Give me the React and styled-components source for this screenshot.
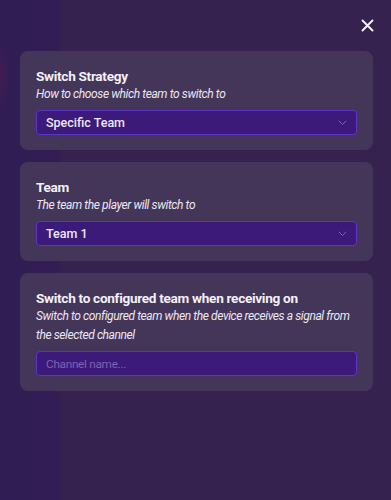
import React from "react";
import styled, { createGlobalStyle } from "styled-components";

const Global = createGlobalStyle`
  html, body { margin: 0; padding: 0; }
  body {
    background: #35224f;
    font-family: Roboto, "Liberation Sans", Arial, sans-serif;
    -webkit-font-smoothing: antialiased;
  }
`;

const Page = styled.div`
  position: relative;
  width: 391px;
  height: 500px;
  box-sizing: border-box;
  padding: 51px 18px 0 20px;
  background:
    radial-gradient(ellipse 10px 36px at 0px 75px, rgba(110, 30, 80, 0.3), transparent),
    linear-gradient(90deg, #301d55 0px, #321e54 58px, #35224f 62px, #35224f 100%);
  overflow: hidden;
`;

const CloseButton = styled.button`
  position: absolute;
  top: 18px;
  right: 17px;
  width: 14px;
  height: 14px;
  padding: 0;
  border: none;
  background: transparent;
  display: flex;
  align-items: center;
  justify-content: center;
  cursor: pointer;
`;

const Stack = styled.div`
  display: flex;
  flex-direction: column;
  gap: 12px;
`;

const Card = styled.section`
  background: #443659;
  border-radius: 8px;
  padding: 16px 16px 15px;
  display: flex;
  flex-direction: column;
`;

const Title = styled.h2`
  margin: 0;
  font-size: 13.6px;
  line-height: 18px;
  font-weight: 700;
  color: #f3f0f8;
  letter-spacing: -0.3px;
`;

const Subtitle = styled.p`
  margin: 0 0 6px;
  font-size: 12px;
  line-height: 19px;
  font-style: italic;
  color: #ebe6f2;
  letter-spacing: -0.4px;
`;

const Field = styled.div`
  height: 25px;
  box-sizing: border-box;
  border: 1px solid #5d34c6;
  border-radius: 4px;
  background: #3c1a79;
  display: flex;
  align-items: center;
  padding: 0 9px;
  font-size: ${(p) => (p.$placeholder ? "11.8px" : "12.5px")};
  font-weight: ${(p) => (p.$placeholder ? 400 : 500)};
  letter-spacing: ${(p) => (p.$placeholder ? "-0.3px" : "0")};
  color: ${(p) => (p.$placeholder ? "#7b62b3" : "#ece8f6")};
`;

const FieldText = styled.span`
  flex: 1;
`;

const Chevron = () => (
  <svg width="9" height="6" viewBox="0 0 9 6" fill="none">
    <path d="M1 1l3.5 3.5L8 1" stroke="#7a66b8" strokeWidth="1" strokeLinecap="round" strokeLinejoin="round" />
  </svg>
);

const Select = ({ value }) => (
  <Field>
    <FieldText>{value}</FieldText>
    <Chevron />
  </Field>
);

export default function App() {
  return (
    <>
      <Global />
      <Page>
        <CloseButton aria-label="Close">
          <svg width="13" height="13" viewBox="0 0 13 13">
            <path d="M1.5 1.5l10 10M11.5 1.5l-10 10" stroke="#f4f2f8" strokeWidth="1.9" strokeLinecap="round" />
          </svg>
        </CloseButton>
        <Stack>
          <Card>
            <Title>Switch Strategy</Title>
            <Subtitle>How to choose which team to switch to</Subtitle>
            <Select value="Specific Team" />
          </Card>
          <Card>
            <Title>Team</Title>
            <Subtitle>The team the player will switch to</Subtitle>
            <Select value="Team 1" />
          </Card>
          <Card>
            <Title>Switch to configured team when receiving on</Title>
            <Subtitle>
              Switch to configured team when the device receives a signal from the selected channel
            </Subtitle>
            <Field $placeholder>
              <FieldText>Channel name...</FieldText>
            </Field>
          </Card>
        </Stack>
      </Page>
    </>
  );
}
